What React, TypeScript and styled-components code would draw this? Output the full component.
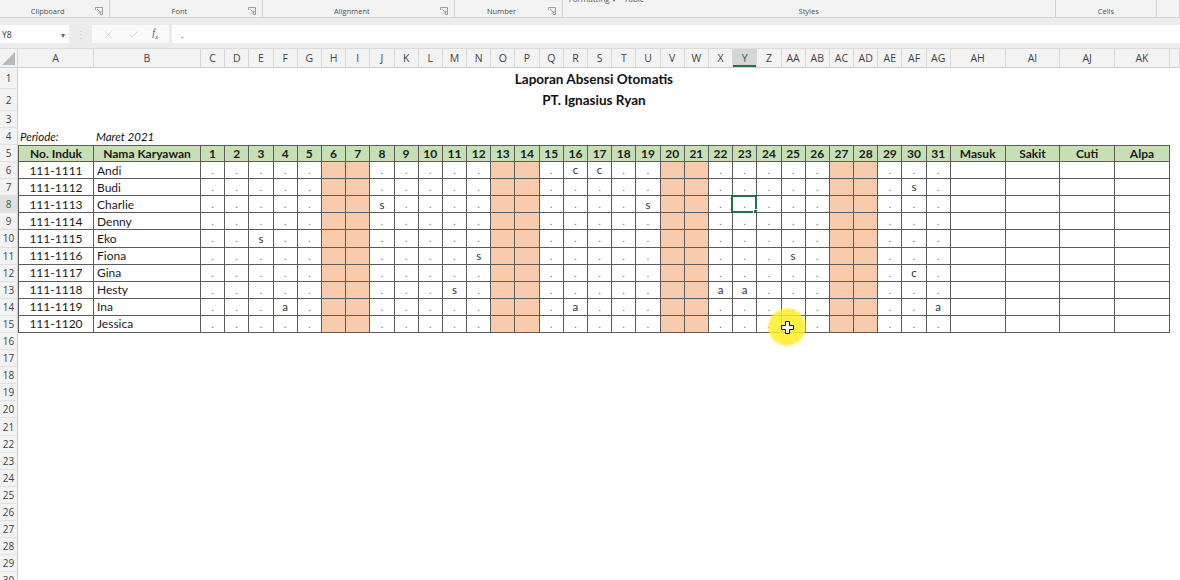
import React from "react";
import styled, { createGlobalStyle } from "styled-components";
import { X, Check } from "lucide-react";

const GlobalStyle = createGlobalStyle`
  html, body {
    margin: 0;
    padding: 0;
    background: #ffffff;
    font-family: "Lato", "Liberation Sans", sans-serif;
  }
`;

const GRID = "18px 76px 107px repeat(31, 24.19px) repeat(4, 54.75px) 1fr";
const LINE = "#5c5c5c";

const weekend = [6, 7, 13, 14, 20, 21, 27, 28];

const employees = [
  { id: "111-1111", name: "Andi", marks: { 16: "c", 17: "c" } },
  { id: "111-1112", name: "Budi", marks: { 30: "s" } },
  { id: "111-1113", name: "Charlie", marks: { 8: "s", 19: "s" } },
  { id: "111-1114", name: "Denny", marks: {} },
  { id: "111-1115", name: "Eko", marks: { 3: "s" } },
  { id: "111-1116", name: "Fiona", marks: { 12: "s", 25: "s" } },
  { id: "111-1117", name: "Gina", marks: { 30: "c" } },
  { id: "111-1118", name: "Hesty", marks: { 11: "s", 22: "a", 23: "a" } },
  { id: "111-1119", name: "Ina", marks: { 4: "a", 16: "a", 31: "a" } },
  { id: "111-1120", name: "Jessica", marks: {} },
] as { id: string; name: string; marks: Record<number, string> }[];

const letters = [
  "A", "B", "C", "D", "E", "F", "G", "H", "I", "J", "K", "L", "M", "N", "O", "P", "Q", "R", "S",
  "T", "U", "V", "W", "X", "Y", "Z", "AA", "AB", "AC", "AD", "AE", "AF", "AG", "AH", "AI", "AJ", "AK",
];

const days = Array.from({ length: 31 }, (_, i) => i + 1);
const totals = ["Masuk", "Sakit", "Cuti", "Alpa"];

const ribbonGroups = [
  { label: "Clipboard", width: 110, launcher: true },
  { label: "Font", width: 153, launcher: true },
  { label: "Alignment", width: 192, launcher: true },
  { label: "Number", width: 107, launcher: true },
  { label: "Styles", width: 495, launcher: false, top: true },
  { label: "Cells", width: 101, launcher: false },
];

const Launcher = () => (
  <svg width="8" height="8" viewBox="0 0 8 8">
    <path d="M0.5 3 V0.5 H7.5 V7.5 H5" fill="none" stroke="#8a8a8a" strokeWidth="0.8" />
    <path d="M2 2 L6 6 M6 3.5 V6 H3.5" fill="none" stroke="#8a8a8a" strokeWidth="0.8" />
  </svg>
);

const SelectAll = () => (
  <svg width="13" height="13" viewBox="0 0 13 13">
    <path d="M13 0 V13 H0 Z" fill="#b9b9b9" />
  </svg>
);

const CursorCross = () => (
  <svg width="13" height="13" viewBox="0 0 13 13">
    <path
      d="M4.5 0.5 H8.5 V4.5 H12.5 V8.5 H8.5 V12.5 H4.5 V8.5 H0.5 V4.5 H4.5 Z"
      fill="#ffffff"
      stroke="#111111"
      strokeWidth="1"
    />
  </svg>
);

const App = () => {
  return (
    <Page>
      <GlobalStyle />
      <Ribbon>
        {ribbonGroups.map((g) => (
          <RibbonGroup key={g.label} $width={g.width}>
            {g.top && <CutText>Formatting ▾&nbsp;&nbsp;&nbsp;&nbsp;Table</CutText>}
            <GroupLabel>{g.label}</GroupLabel>
            {g.launcher && (
              <LauncherBox>
                <Launcher />
              </LauncherBox>
            )}
          </RibbonGroup>
        ))}
        <RibbonGroup $width={22} />
      </Ribbon>

      <FormulaBar>
        <NameBox>
          <span>Y8</span>
          <Caret>▾</Caret>
        </NameBox>
        <Grip>⋮</Grip>
        <FxButtons>
          <X size={11} color="#c4c4c4" strokeWidth={1.5} />
          <Check size={11} color="#c4c4c4" strokeWidth={1.5} />
          <Fx>
            f<sub>x</sub>
          </Fx>
        </FxButtons>
        <FormulaInput>.</FormulaInput>
      </FormulaBar>

      <Sheet>
        <HeaderRow>
          <Corner>
            <SelectAll />
          </Corner>
          {letters.map((l) => (
            <ColLetter key={l} $active={l === "Y"}>
              {l}
            </ColLetter>
          ))}
          <ColLetter />
        </HeaderRow>

        <Row $h={21.4}>
          <RowNum>1</RowNum>
          <Title>Laporan Absensi Otomatis</Title>
        </Row>
        <Row $h={21.4}>
          <RowNum>2</RowNum>
          <Title>PT. Ignasius Ryan</Title>
        </Row>
        <Row>
          <RowNum>3</RowNum>
        </Row>
        <Row>
          <RowNum>4</RowNum>
          <Note>Periode:</Note>
          <Note>Maret 2021</Note>
        </Row>

        <Row>
          <RowNum>5</RowNum>
          <Cell $head $first>No. Induk</Cell>
          <Cell $head>Nama Karyawan</Cell>
          {days.map((d) => (
            <Cell key={d} $head>
              {d}
            </Cell>
          ))}
          {totals.map((t) => (
            <Cell key={t} $head>
              {t}
            </Cell>
          ))}
        </Row>

        {employees.map((e, i) => {
          const rowNo = i + 6;
          return (
            <Row key={e.id}>
              <RowNum $active={rowNo === 8}>{rowNo}</RowNum>
              <Cell $first>{e.id}</Cell>
              <Cell $align="flex-start">{e.name}</Cell>
              {days.map((d) => {
                const off = weekend.includes(d);
                return (
                  <Cell key={d} $off={off}>
                    {!off && <Mark $dot={!e.marks[d]}>{e.marks[d] ?? "."}</Mark>}
                    {rowNo === 8 && d === 23 && <Selection />}
                  </Cell>
                );
              })}
              {totals.map((t) => (
                <Cell key={t} />
              ))}
            </Row>
          );
        })}

        {Array.from({ length: 15 }, (_, i) => (
          <Row key={i}>
            <RowNum>{i + 16}</RowNum>
          </Row>
        ))}

        <Highlight>
          <CursorCross />
        </Highlight>
      </Sheet>
    </Page>
  );
};

export default App;

const Page = styled.div`
  width: 1180px;
  height: 580px;
  overflow: hidden;
  background: #ffffff;
`;

const Ribbon = styled.div`
  display: flex;
  height: 17px;
  background: #f3f3f3;
  border-bottom: 1px solid #d6d6d6;
`;

const RibbonGroup = styled.div<{ $width: number }>`
  position: relative;
  display: flex;
  align-items: center;
  width: ${(p) => p.$width}px;
  border-right: 1px solid #d4d4d4;
  overflow: hidden;
`;

const GroupLabel = styled.div`
  flex: 1;
  text-align: center;
  font-family: "Open Sans", sans-serif;
  font-size: 7.5px;
  color: #505050;
  padding-top: 4px;
`;

const CutText = styled.div`
  position: absolute;
  top: -7px;
  left: 6px;
  font-family: "Open Sans", sans-serif;
  font-size: 8px;
  color: #555;
`;

const LauncherBox = styled.div`
  width: 14px;
  display: flex;
  align-items: center;
  padding-top: 4px;
`;

const FormulaBar = styled.div`
  display: flex;
  align-items: center;
  height: 31px;
  padding-top: 2px;
  box-sizing: border-box;
  background: #ececec;
  border-bottom: 1px solid #dcdcdc;
`;

const NameBox = styled.div`
  display: flex;
  align-items: center;
  justify-content: space-between;
  width: 69px;
  height: 18px;
  box-sizing: border-box;
  padding: 0 4px 0 2px;
  background: #ffffff;
  font-family: "Open Sans", sans-serif;
  font-size: 8.5px;
  color: #333;
`;

const Caret = styled.span`
  font-size: 8px;
  color: #666;
`;

const Grip = styled.div`
  width: 23px;
  text-align: center;
  font-size: 10px;
  color: #bdbdbd;
`;

const FxButtons = styled.div`
  display: flex;
  align-items: center;
  justify-content: space-around;
  width: 77px;
  height: 18px;
  padding: 0 4px;
  box-sizing: border-box;
  background: #fafafa;
`;

const Fx = styled.span`
  font-family: "Liberation Serif", serif;
  font-style: italic;
  font-size: 10px;
  color: #555;
  sub {
    font-size: 7px;
  }
`;

const FormulaInput = styled.div`
  flex: 1;
  height: 18px;
  margin-left: 3px;
  padding-left: 9px;
  display: flex;
  align-items: center;
  background: #ffffff;
  font-family: "Open Sans", sans-serif;
  font-size: 9px;
  color: #333;
`;

const Sheet = styled.div`
  position: relative;
`;

const HeaderRow = styled.div`
  display: grid;
  grid-template-columns: ${GRID};
  height: 19px;
  background: #f3f3f3;
  border-bottom: 1px solid #cfcfcf;
  box-sizing: border-box;
`;

const Corner = styled.div`
  display: flex;
  align-items: flex-end;
  justify-content: flex-end;
  padding: 0 2px 2px 0;
  border-right: 1px solid #d6d6d6;
`;

const ColLetter = styled.div<{ $active?: boolean }>`
  display: flex;
  align-items: center;
  justify-content: center;
  border-right: 1px solid #d8d8d8;
  font-family: "Open Sans", sans-serif;
  font-size: 10.5px;
  color: ${(p) => (p.$active ? "#1e6b41" : "#444")};
  background: ${(p) => (p.$active ? "#d6d6d6" : "transparent")};
  box-shadow: ${(p) => (p.$active ? "inset 0 -2px 0 #217346" : "none")};
`;

const Row = styled.div<{ $h?: number }>`
  display: grid;
  grid-template-columns: ${GRID};
  height: ${(p) => p.$h ?? 17.1}px;
`;

const RowNum = styled.div<{ $active?: boolean }>`
  display: flex;
  align-items: center;
  justify-content: center;
  background: ${(p) => (p.$active ? "#e0e0e0" : "#f3f3f3")};
  border-right: 1px solid #cfcfcf;
  border-bottom: 1px solid #e0e0e0;
  box-sizing: border-box;
  font-family: "Open Sans", sans-serif;
  font-size: 10px;
  color: ${(p) => (p.$active ? "#217346" : "#444")};
`;

const Title = styled.div`
  grid-column: 2 / 39;
  display: flex;
  align-items: center;
  justify-content: center;
  font-weight: 700;
  font-size: 13.5px;
  color: #111;
`;

const Note = styled.div`
  display: flex;
  align-items: center;
  padding-left: 2px;
  font-style: italic;
  font-size: 11.5px;
  color: #111;
`;

const Cell = styled.div<{
  $head?: boolean;
  $first?: boolean;
  $off?: boolean;
  $align?: string;
}>`
  position: relative;
  display: flex;
  align-items: center;
  justify-content: ${(p) => p.$align ?? "center"};
  padding-left: ${(p) => (p.$align ? "3px" : "0")};
  box-sizing: border-box;
  border-right: 1px solid ${LINE};
  border-bottom: 1px solid ${LINE};
  border-left: ${(p) => (p.$first ? `1px solid ${LINE}` : "none")};
  border-top: ${(p) => (p.$head ? `1px solid ${LINE}` : "none")};
  background: ${(p) => (p.$head ? "#c6e0b4" : p.$off ? "#f8cbad" : "#ffffff")};
  font-weight: ${(p) => (p.$head ? 700 : 400)};
  font-size: 12px;
  color: #1a1a1a;
  white-space: nowrap;
`;

const Mark = styled.span<{ $dot: boolean }>`
  font-size: ${(p) => (p.$dot ? "10px" : "11.5px")};
  color: ${(p) => (p.$dot ? "#666" : "#333")};
  line-height: 1;
`;

const Selection = styled.div`
  position: absolute;
  inset: -1px -1px -1px -2px;
  border: 2px solid #217346;

  &::after {
    content: "";
    position: absolute;
    right: -4px;
    bottom: -4px;
    width: 4px;
    height: 4px;
    background: #217346;
    border: 1px solid #fff;
  }
`;

const Highlight = styled.div`
  position: absolute;
  left: 767px;
  top: 258px;
  width: 40px;
  height: 40px;
  border-radius: 50%;
  background: radial-gradient(circle, rgba(255, 236, 40, 0.85) 60%, rgba(255, 236, 40, 0) 72%);
  display: flex;
  align-items: center;
  justify-content: center;
`;
